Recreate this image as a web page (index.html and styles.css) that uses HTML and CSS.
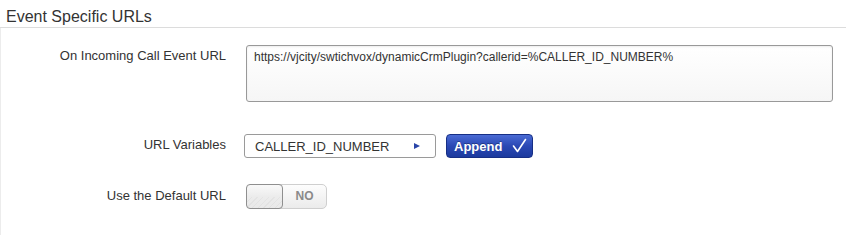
FILE: index.html
```html
<!DOCTYPE html>
<html>
<head>
    <title>Event Specific URLs</title>
    <link rel="stylesheet" href="styles.css">
</head>
<body>
    <h3 class="section-title">Event Specific URLs</h3>
    <div class="section-body">
        <div class="form-row">
            <label class="form-label" for="incomingUrl">On Incoming Call Event URL</label>
            <textarea id="incomingUrl" class="url-box">https://vjcity/swtichvox/dynamicCrmPlugin?callerid=%CALLER_ID_NUMBER%</textarea>
        </div>
        <div class="form-row row-vars">
            <label class="form-label">URL Variables</label>
            <div class="controls">
                <div class="var-select">
                    <span>CALLER_ID_NUMBER</span>
                    <span class="arrow"></span>
                </div>
                <button type="button" class="append-btn">Append
                    <svg width="15" height="15" viewBox="0 0 15 15"><polyline points="1.5,8 5.5,13.5 13.5,1.5" fill="none" stroke="#fff" stroke-width="1.6" stroke-linejoin="round" stroke-linecap="round"/></svg>
                </button>
            </div>
        </div>
        <div class="form-row row-default">
            <label class="form-label">Use the Default URL</label>
            <div class="toggle">
                <span class="knob"></span>
                <span class="toggle-text">NO</span>
            </div>
        </div>
    </div>
</body>
</html>
```

FILE: styles.css
```css
body {
    margin: 0;
    font-family: "Liberation Sans", Arial, sans-serif;
    color: #333;
    background: #fff;
}
.section-title {
    margin: 0;
    padding: 7px 6px 1px;
    font-size: 16px;
    font-weight: normal;
    line-height: 19px;
    border-bottom: 1px solid #dcdcdc;
}
.section-body {
    border-left: 1px solid #ececec;
    padding: 17px 13px 30px 0;
}
.form-row {
    display: flex;
    align-items: flex-start;
}
.form-label {
    width: 225px;
    flex: none;
    margin-right: 20px;
    padding-top: 3px;
    text-align: right;
    font-size: 13px;
    line-height: 15px;
}
.url-box {
    flex: 1;
    box-sizing: border-box;
    height: 57px;
    margin: 0;
    padding: 4px 7px;
    border: 1px solid #999;
    border-radius: 3px;
    background: linear-gradient(#fff, #f6f6f6);
    box-shadow: inset 0 1px 2px rgba(0, 0, 0, 0.08);
    font-family: "Liberation Sans", Arial, sans-serif;
    font-size: 12px;
    line-height: 14px;
    color: #333;
    resize: none;
}
.row-vars {
    margin-top: 32px;
}
.controls {
    display: flex;
    align-items: center;
    margin-left: -2px;
}
.var-select {
    box-sizing: border-box;
    width: 192px;
    height: 24px;
    display: flex;
    align-items: center;
    justify-content: space-between;
    padding: 0 15px 0 10px;
    border: 1px solid #9a9a9a;
    border-radius: 3px;
    font-size: 13px;
    background: #fff;
}
.arrow {
    width: 0;
    height: 0;
    border-top: 3px solid transparent;
    border-bottom: 3px solid transparent;
    border-left: 6px solid #2a45a8;
}
.append-btn {
    box-sizing: border-box;
    height: 24px;
    width: 87px;
    margin-left: 10px;
    padding: 0 0 0 7px;
    display: flex;
    align-items: center;
    gap: 10px;
    border: 1px solid #172f85;
    border-radius: 4px;
    background: linear-gradient(#4a6bd4, #2a48b4 50%, #1c3a9e);
    color: #fff;
    font-family: "Liberation Sans", Arial, sans-serif;
    font-size: 13px;
    font-weight: bold;
    text-shadow: 0 -1px 0 rgba(0, 0, 0, 0.3);
    cursor: pointer;
}
.append-btn svg {
    margin-top: -1px;
}
.row-default {
    margin-top: 26px;
}
.row-default .form-label {
    padding-top: 4px;
}
.toggle {
    box-sizing: border-box;
    width: 81px;
    height: 25px;
    display: flex;
    border: 1px solid #cfcfcf;
    border-radius: 5px;
    background: linear-gradient(#fdfdfd, #ebebeb);
}
.knob {
    box-sizing: border-box;
    width: 37px;
    height: 25px;
    margin: -1px 0 0 -1px;
    border: 1px solid #8f8f8f;
    border-radius: 4px;
    background:
        repeating-linear-gradient(135deg, transparent 0 3px, rgba(0, 0, 0, 0.035) 3px 4px) bottom / 100% 50% no-repeat,
        linear-gradient(#f9f9f9, #ececec 50%, #e9e9e9);
}
.toggle-text {
    flex: 1;
    text-align: center;
    font-size: 12px;
    font-weight: bold;
    line-height: 23px;
    color: #8a8a8a;
}
```
